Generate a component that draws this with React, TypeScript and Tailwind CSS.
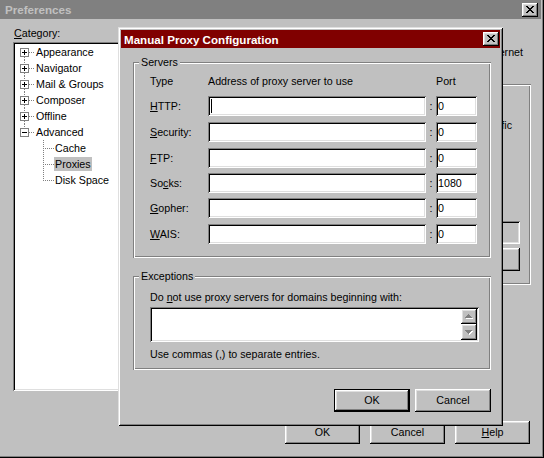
const raised =
  "shadow-[inset_-1px_-1px_#000,inset_1px_1px_#fff,inset_-2px_-2px_#808080,inset_2px_2px_#dfdfdf]";
const raisedDefault =
  "shadow-[inset_0_0_0_1px_#000,inset_-2px_-2px_#000,inset_2px_2px_#fff,inset_-3px_-3px_#808080,inset_3px_3px_#dfdfdf]";
const sunken =
  "shadow-[inset_1px_1px_#808080,inset_-1px_-1px_#fff,inset_2px_2px_#000,inset_-2px_-2px_#dfdfdf]";
const etched =
  "shadow-[inset_1px_1px_#808080,inset_-1px_-1px_#fff,inset_2px_2px_#fff,inset_-2px_-2px_#808080]";
const frame =
  "shadow-[inset_1px_1px_#dfdfdf,inset_-1px_-1px_#000,inset_2px_2px_#fff,inset_-2px_-2px_#808080]";

interface TreeItem {
  label: string;
  child?: boolean;
  expanded?: boolean;
  first?: boolean;
  last?: boolean;
  selected?: boolean;
}

const tree: TreeItem[] = [
  { label: "Appearance", first: true },
  { label: "Navigator" },
  { label: "Mail & Groups" },
  { label: "Composer" },
  { label: "Offline" },
  { label: "Advanced", expanded: true, last: true },
  { label: "Cache", child: true },
  { label: "Proxies", child: true, selected: true },
  { label: "Disk Space", child: true, last: true },
];

interface ServerRow {
  pre?: string;
  key: string;
  post: string;
  port: string;
  mt: string;
  caret?: boolean;
}

const servers: ServerRow[] = [
  { key: "H", post: "TTP:", port: "0", mt: "mt-[8px]", caret: true },
  { key: "S", post: "ecurity:", port: "0", mt: "mt-[6px]" },
  { key: "F", post: "TP:", port: "0", mt: "mt-[6px]" },
  { pre: "So", key: "c", post: "ks:", port: "1080", mt: "mt-[5px]" },
  { key: "G", post: "opher:", port: "0", mt: "mt-[5px]" },
  { key: "W", post: "AIS:", port: "0", mt: "mt-[6px]" },
];

function CloseButton() {
  return (
    <div className={`w-[16px] h-[14px] bg-[#c0c0c0] flex justify-center pt-[3px] ${raised}`}>
      <svg width="8" height="7" viewBox="0 0 8 7" shapeRendering="crispEdges">
        <path
          d="M0 0h2v1H0zM6 0h2v1H6zM1 1h2v1H1zM5 1h2v1H5zM2 2h4v1H2zM3 3h2v1H3zM2 4h4v1H2zM1 5h2v1H1zM5 5h2v1H5zM0 6h2v1H0zM6 6h2v1H6z"
          fill="#000"
        />
      </svg>
    </div>
  );
}

function TreeConnector({ item }: { item: TreeItem }) {
  if (item.child) {
    return (
      <svg width="39" height="16" viewBox="0 0 39 16" shapeRendering="crispEdges" className="shrink-0">
        <path
          d={item.last ? "M28.5 0v9" : "M28.5 0v16"}
          stroke="#808080"
          strokeDasharray="1 1"
          fill="none"
        />
        <path d="M30 8.5h9" stroke="#808080" strokeDasharray="1 1" fill="none" />
      </svg>
    );
  }
  const vert = item.first ? "M9.5 13v3" : item.last ? "M9.5 0v4" : "M9.5 0v4M9.5 13v3";
  return (
    <svg width="20" height="16" viewBox="0 0 20 16" shapeRendering="crispEdges" className="shrink-0">
      <path d={vert} stroke="#808080" strokeDasharray="1 1" fill="none" />
      <path d="M14 8.5h6" stroke="#808080" strokeDasharray="1 1" fill="none" />
      <rect x="5.5" y="4.5" width="8" height="8" fill="#fff" stroke="#808080" />
      <path d={item.expanded ? "M7 8.5h5" : "M7 8.5h5M9.5 6v5"} stroke="#000" fill="none" />
    </svg>
  );
}

function Arrow({ up }: { up?: boolean }) {
  return (
    <svg width="8" height="5" viewBox="0 0 8 5" shapeRendering="crispEdges">
      {up ? (
        <>
          <path d="M4 1h1v1h1v1h1v1h1v1H1V4h1V3h1V2h1z" fill="#fff" />
          <path d="M3 0h1v1h1v1h1v1h1v1H0V3h1V2h1V1h1z" fill="#808080" />
        </>
      ) : (
        <>
          <path d="M1 1h7v1H7v1H6v1H5v1H4V4H3V3H2V2H1z" fill="#fff" />
          <path d="M0 0h7v1H6v1H5v1H4v1H3V3H2V2H1V1H0z" fill="#808080" />
        </>
      )}
    </svg>
  );
}

function PreferencesWindow() {
  return (
    <div className="flex flex-col h-full">
      <div className="w-[541px] h-[19px] bg-[#808080] flex items-center justify-between pl-[5px] pr-[3px]">
        <span className="font-bold text-[11.6px] text-[#c0c0c0]">Preferences</span>
        <CloseButton />
      </div>
      <div className="flex pl-[13px] pr-[13px] pt-[8px]">
        <div className="flex flex-col w-[150px]">
          <div className="h-[13px] pl-[1px]">
            <span className="underline">C</span>ategory:
          </div>
          <div className={`mt-[2px] h-[349px] bg-white pt-[2px] pl-[2px] ${sunken}`}>
            {tree.map((item) => (
              <div key={item.label} className="flex items-center h-[16px] whitespace-nowrap">
                <TreeConnector item={item} />
                <span
                  className={`h-[14px] flex items-center px-[1px] ${item.selected ? "bg-[#c0c0c0]" : ""}`}
                >
                  {item.label}
                </span>
              </div>
            ))}
          </div>
        </div>

        <div className="flex-1 flex flex-col ml-[20px]">
          <div className="mt-[19px] h-[13px] pr-[8px] text-right whitespace-nowrap">
            the Internet
          </div>
          <div className={`mt-[25px] h-[201px] flex flex-col items-end pr-[11px] ${etched}`}>
            <div className="mt-[35px] h-[13px] pr-[8px] whitespace-nowrap">specific</div>
            <div className={`mt-[89px] w-[150px] h-[23px] bg-[#c0c0c0] ${sunken}`} />
            <div className={`mt-[4px] w-[75px] h-[23px] bg-[#c0c0c0] ${raised}`} />
          </div>
          <div className="mt-[136px] flex justify-end gap-[10px] pr-[1px]">
            <div className={`w-[75px] h-[23px] flex items-center justify-center ${raised}`}>OK</div>
            <div className={`w-[75px] h-[23px] flex items-center justify-center ${raised}`}>Cancel</div>
            <div className={`w-[75px] h-[23px] flex items-center justify-center ${raised}`}>
              <span>
                <span className="underline">H</span>elp
              </span>
            </div>
          </div>
        </div>
      </div>
    </div>
  );
}

function ProxyDialog() {
  return (
    <div className={`absolute left-[118px] top-[27px] w-[385px] h-[399px] bg-[#c0c0c0] p-[3px] ${frame}`}>
      <div className="h-[18px] bg-[#800000] flex items-center justify-between pl-[3px] pr-[1px]">
        <span className="font-bold text-[11.6px] text-white">Manual Proxy Configuration</span>
        <CloseButton />
      </div>

      <div className="pl-[12px] pr-[9px] pt-[14px]">
        <div className={`relative h-[196px] pl-[17px] pt-[13px] ${etched}`}>
          <span className="absolute left-[6px] top-[-6px] px-[2px] bg-[#c0c0c0]">Servers</span>
          <div className="grid grid-cols-[58px_218px_10px_41px] h-[13px]">
            <span>Type</span>
            <span>Address of proxy server to use</span>
            <span />
            <span>Port</span>
          </div>
          {servers.map((row) => (
            <div
              key={row.post}
              className={`grid grid-cols-[58px_218px_10px_41px] h-[20px] items-center ${row.mt}`}
            >
              <span>
                {row.pre}
                <span className="underline">{row.key}</span>
                {row.post}
              </span>
              <div className={`h-[20px] bg-white flex items-center ${sunken}`}>
                {row.caret && <span className="ml-[3px] w-[1px] h-[14px] bg-black" />}
              </div>
              <span className="text-center">:</span>
              <div className={`h-[20px] bg-white flex items-center pl-[2px] ${sunken}`}>{row.port}</div>
            </div>
          ))}
        </div>

        <div className={`relative mt-[18px] h-[94px] pl-[17px] pt-[15px] ${etched}`}>
          <span className="absolute left-[6px] top-[-6px] px-[2px] bg-[#c0c0c0]">Exceptions</span>
          <div className="h-[13px]">
            Do <span className="underline">n</span>ot use proxy servers for domains beginning with:
          </div>
          <div className={`mt-[3px] w-[329px] h-[35px] bg-white flex justify-end p-[2px] ${sunken}`}>
            <div className="w-[16px] flex flex-col">
              <div className={`h-[15px] bg-[#c0c0c0] flex items-center justify-center ${raised}`}>
                <Arrow up />
              </div>
              <div className={`h-[16px] bg-[#c0c0c0] flex items-center justify-center ${raised}`}>
                <Arrow />
              </div>
            </div>
          </div>
          <div className="mt-[6px] h-[13px]">Use commas (,) to separate entries.</div>
        </div>

        <div className="mt-[19px] flex justify-end gap-[5px]">
          <div className={`w-[76px] h-[23px] flex items-center justify-center ${raisedDefault}`}>OK</div>
          <div className={`w-[76px] h-[23px] flex items-center justify-center ${raised}`}>Cancel</div>
        </div>
      </div>
    </div>
  );
}

export default function App() {
  return (
    <div className="relative w-[544px] h-[458px] bg-[#c0c0c0] overflow-hidden font-['Liberation_Sans',Arial,sans-serif] text-[10.7px] leading-[13px] text-black shadow-[inset_-1px_-1px_#000,inset_-2px_-2px_#808080]">
      <PreferencesWindow />
      <ProxyDialog />
    </div>
  );
}
